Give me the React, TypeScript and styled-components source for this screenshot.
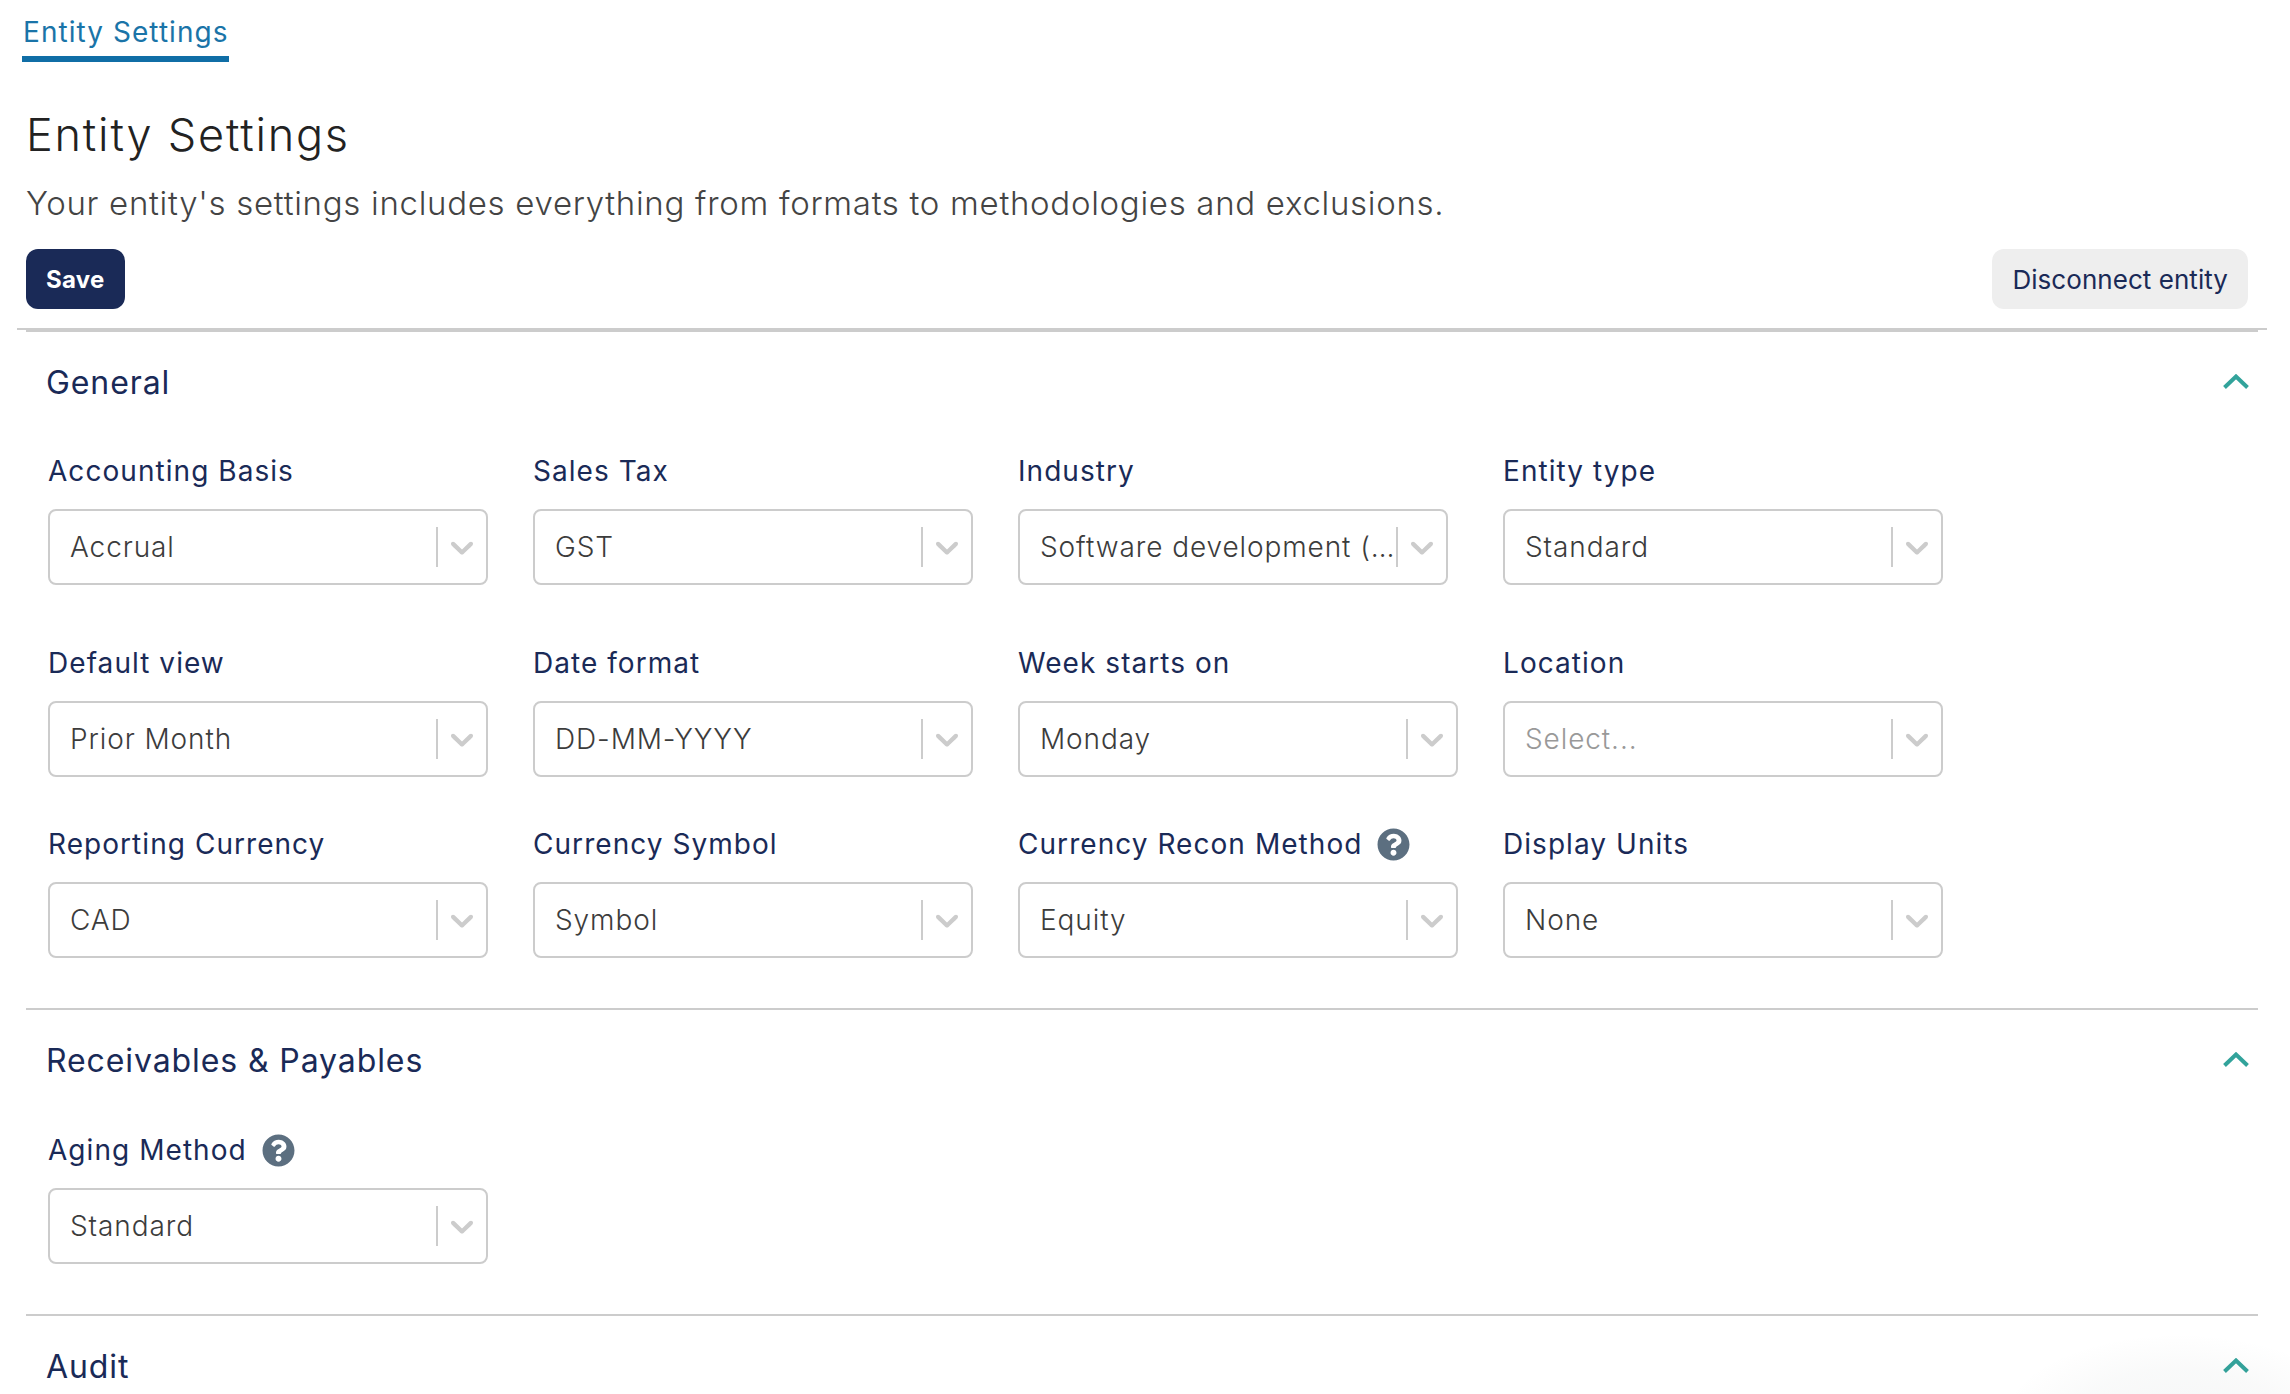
import React from 'react';
import styled, { createGlobalStyle } from 'styled-components';
import { FaQuestionCircle } from 'react-icons/fa';

const GlobalStyle = createGlobalStyle`
  html, body {
    margin: 0;
    padding: 0;
    background: #fff;
  }
  body {
    font-family: Inter, "Open Sans", sans-serif;
    color: #333;
  }
  * {
    box-sizing: border-box;
  }
`;

const Page = styled.div`
  position: relative;
  height: 100vh;
  overflow: hidden;
`;

const TabBar = styled.div`
  display: flex;
  padding-left: 22px;
`;

const Tab = styled.div`
  height: 62px;
  padding: 12px 0 0 1px;
  border-bottom: 6px solid #106ea6;
  color: #1a74a8;
  font-size: 28px;
  line-height: 40px;
  letter-spacing: 1.05px;
`;

const Title = styled.h1`
  margin: 43px 0 0 26px;
  height: 60px;
  color: #222;
  font-size: 45px;
  font-weight: 350;
  line-height: 60px;
  letter-spacing: 1.8px;
`;

const Description = styled.p`
  margin: 16px 0 0 26px;
  height: 44px;
  color: #444;
  font-size: 33px;
  font-weight: 350;
  line-height: 44px;
  letter-spacing: 0.7px;
`;

const Actions = styled.div`
  display: flex;
  justify-content: space-between;
  margin-top: 24px;
  padding: 0 42px 0 26px;
`;

const Button = styled.button<{ $primary?: boolean }>`
  height: 60px;
  padding: 0 20px;
  border: none;
  border-radius: 12px;
  background: ${(props) => (props.$primary ? '#1a2a57' : '#eeeeee')};
  color: ${(props) => (props.$primary ? '#fff' : '#1a2a57')};
  font-family: inherit;
  font-size: ${(props) => (props.$primary ? '24px' : '26px')};
  font-weight: ${(props) => (props.$primary ? 700 : 400)};
  letter-spacing: ${(props) => (props.$primary ? '0.3px' : '0.05px')};
`;

const TopRule = styled.div`
  height: 2px;
  margin: 19px 23px 0 17px;
  background: #ccc;
`;

const Section = styled.section`
  margin: 0 32px 0 26px;
  padding-bottom: 50px;
  border-top: 2px solid #ccc;
`;

const SectionHeader = styled.div`
  display: flex;
  align-items: center;
  justify-content: space-between;
  height: 101px;
  padding: 0 9px 0 20px;
`;

const SectionTitle = styled.h2`
  margin: 0;
  color: #1a2a57;
  font-size: 32px;
  font-weight: 400;
  letter-spacing: 0.9px;
`;

const Collapse = styled.svg`
  width: 26px;
  height: 15px;
  margin-bottom: 2px;
  fill: none;
  stroke: #32a39b;
  stroke-width: 4;
`;

const FieldRow = styled.div<{ $gap: number }>`
  display: grid;
  grid-template-columns: repeat(4, 440px);
  column-gap: 45px;
  margin-top: ${(props) => props.$gap}px;
  padding-left: 22px;
`;

const Label = styled.label`
  display: flex;
  align-items: center;
  gap: 15px;
  height: 36px;
  color: #1a2a57;
  font-size: 28px;
  font-weight: 400;
  letter-spacing: 1.05px;
`;

const SelectBox = styled.div<{ $narrow?: boolean }>`
  display: flex;
  align-items: center;
  width: ${(props) => (props.$narrow ? '430px' : '100%')};
  height: 76px;
  margin-top: 20px;
  padding: 0 5px 0 20px;
  border: 2px solid #ccc;
  border-radius: 8px;
  background: #fff;
`;

const SelectValue = styled.div<{ $placeholder?: boolean }>`
  flex: 1;
  min-width: 0;
  overflow: hidden;
  white-space: nowrap;
  color: ${(props) => (props.$placeholder ? '#999' : '#3c3c3c')};
  font-size: 28px;
  font-weight: 350;
  letter-spacing: 0.9px;
`;

const Divider = styled.span`
  width: 2px;
  height: 40px;
  margin-right: 5px;
  background: #ccc;
`;

const Caret = styled.svg`
  width: 38px;
  height: 38px;
  fill: #ccc;
`;

const Corner = styled.div`
  position: absolute;
  right: -70px;
  bottom: -120px;
  width: 360px;
  height: 180px;
  border-radius: 50%;
  background: radial-gradient(closest-side, rgba(90, 105, 105, 0.06) 0%, rgba(90, 105, 105, 0.035) 60%, rgba(90, 105, 105, 0) 100%);
  pointer-events: none;
`;

interface FieldType {
  label: string;
  value: string;
  help?: boolean;
  narrow?: boolean;
  placeholder?: boolean;
}

const generalRows: { gap: number; fields: FieldType[] }[] = [
  {
    gap: 20,
    fields: [
      { label: 'Accounting Basis', value: 'Accrual' },
      { label: 'Sales Tax', value: 'GST' },
      { label: 'Industry', value: 'Software development (…', narrow: true },
      { label: 'Entity type', value: 'Standard' },
    ],
  },
  {
    gap: 60,
    fields: [
      { label: 'Default view', value: 'Prior Month' },
      { label: 'Date format', value: 'DD-MM-YYYY' },
      { label: 'Week starts on', value: 'Monday' },
      { label: 'Location', value: 'Select...', placeholder: true },
    ],
  },
  {
    gap: 49,
    fields: [
      { label: 'Reporting Currency', value: 'CAD' },
      { label: 'Currency Symbol', value: 'Symbol' },
      { label: 'Currency Recon Method', value: 'Equity', help: true },
      { label: 'Display Units', value: 'None' },
    ],
  },
];

const Field: React.FC<{ field: FieldType }> = ({ field }) => (
  <div>
    <Label>
      {field.label}
      {field.help && <FaQuestionCircle size={33} color="#5c6f80" />}
    </Label>
    <SelectBox $narrow={field.narrow}>
      <SelectValue $placeholder={field.placeholder}>{field.value}</SelectValue>
      <Divider />
      <Caret viewBox="0 0 20 20">
        <path d="M4.516 7.548c0.436-0.446 1.043-0.481 1.576 0l3.908 3.747 3.908-3.747c0.533-0.481 1.141-0.446 1.574 0 0.436 0.445 0.408 1.197 0 1.615-0.406 0.418-4.695 4.502-4.695 4.502-0.217 0.223-0.502 0.335-0.787 0.335s-0.57-0.112-0.789-0.335c0 0-4.287-4.084-4.695-4.502s-0.436-1.17 0-1.615z" />
      </Caret>
    </SelectBox>
  </div>
);

const Header: React.FC<{ title: string }> = ({ title }) => (
  <SectionHeader>
    <SectionTitle>{title}</SectionTitle>
    <Collapse viewBox="0 0 26 15">
      <polyline points="1.5,13.5 13,2.5 24.5,13.5" />
    </Collapse>
  </SectionHeader>
);

const App: React.FC = () => (
  <Page>
    <GlobalStyle />
    <TabBar>
      <Tab>Entity Settings</Tab>
    </TabBar>
    <Title>Entity Settings</Title>
    <Description>Your entity's settings includes everything from formats to methodologies and exclusions.</Description>
    <Actions>
      <Button $primary>Save</Button>
      <Button>Disconnect entity</Button>
    </Actions>
    <TopRule />
    <Section>
      <Header title="General" />
      {generalRows.map((row, index) => (
        <FieldRow key={index} $gap={row.gap}>
          {row.fields.map((field) => (
            <Field key={field.label} field={field} />
          ))}
        </FieldRow>
      ))}
    </Section>
    <Section>
      <Header title="Receivables & Payables" />
      <FieldRow $gap={21}>
        <Field field={{ label: 'Aging Method', value: 'Standard', help: true }} />
      </FieldRow>
    </Section>
    <Section>
      <Header title="Audit" />
    </Section>
    <Corner />
  </Page>
);

export default App;
